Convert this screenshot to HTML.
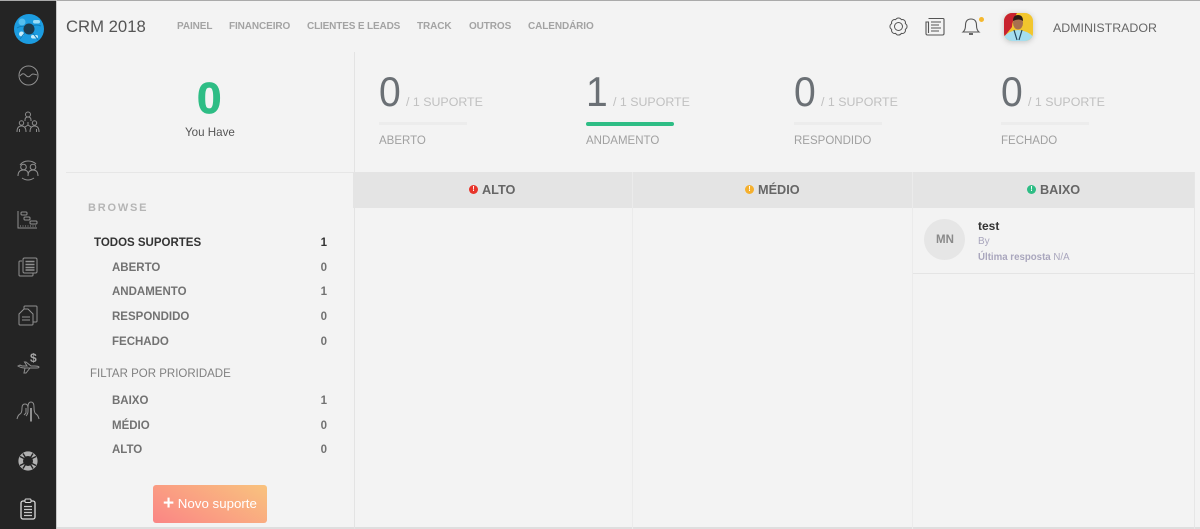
<!DOCTYPE html>
<html><head><meta charset="utf-8"><style>
html,body{margin:0;padding:0}
body{width:1200px;height:529px;overflow:hidden;background:#f3f3f3;position:relative;font-family:"Liberation Sans",sans-serif}
.t{position:absolute;white-space:nowrap;line-height:1}
.b{position:absolute}
svg{position:absolute;overflow:visible}
.nav{font-size:10px;font-weight:bold;color:#a3a3a3;top:22px;letter-spacing:-.1px}
.m{font-size:11.500px;font-weight:bold;color:#727272;left:112px}
.n{font-size:11.500px;font-weight:bold;color:#727272;right:873px}
.big{font-size:42px;color:#6b7075;top:71px;transform:scaleX(.93);transform-origin:left}
.sub{font-size:12.400px;color:#c0c0c0;top:96px}
.lab{font-size:11.500px;color:#a0a0a0;top:136px}
.hd{font-size:12.700px;font-weight:bold;color:#666;top:184px}
.dot{position:absolute;top:185px;width:9px;height:9px;border-radius:50%;color:#fff;font:bold 7px/9px "Liberation Sans",sans-serif;text-align:center}
.s path,.s circle,.s rect{fill:none;stroke:#8f8f8f;stroke-width:1}
</style></head><body>
<div class="b" style="left:0;top:0;width:1200px;height:1px;background:#aaa"></div>
<div class="b" style="left:0;top:1px;width:56px;height:528px;background:#242424"></div>
<div class="b" style="left:56px;top:0;width:1px;height:529px;background:#c8c8c8"></div>
<div class="b" style="left:57px;top:527px;width:1143px;height:2px;background:#dedede"></div>

<!-- logo -->
<svg style="left:14px;top:14px" width="30" height="30" viewBox="0 0 30 30">
<circle cx="15" cy="15" r="15" fill="#1c9ce0"/>
<circle cx="8" cy="8" r="3.500" fill="#55bff0"/><rect x="19" y="6" width="7" height="3.500" rx="1.700" fill="#9adcf8"/>
<circle cx="7.500" cy="20" r="2.500" fill="#c5ecfb"/><rect x="17" y="21" width="7" height="3.500" rx="1.700" fill="#c5ecfb"/>
<path d="M3 14Q9 10 15 15M27 12Q20 9 15 15M6 25Q11 18 15 15M24 26Q20 20 15 15" stroke="#0f7dbb" stroke-width="1" fill="none"/>
<circle cx="15" cy="15" r="5.500" fill="#1e3a4c"/>
</svg>
<!-- sidebar icons -->
<svg class="s" style="left:18px;top:65px" width="21" height="21" viewBox="0 0 21 21"><circle cx="10.500" cy="10.500" r="9.500"/><path d="M2 11Q5 7 7.500 10T12 11T15 9T19 10"/></svg>
<svg class="s" style="left:16px;top:111px" width="24" height="22" viewBox="0 0 24 22"><circle cx="12" cy="3.500" r="2.500"/><path d="M9 10V9Q9 6 12 6T15 9V10M12 11V14M12 14L9 16M12 14L15 16"/><circle cx="5.500" cy="12" r="2.200"/><path d="M1 21Q1 15 5.500 15T10 21M3.500 21V18"/><circle cx="18.500" cy="12" r="2.200"/><path d="M14 21Q14 15 18.500 15T23 21M20.500 21V18"/></svg>
<svg class="s" style="left:16px;top:160px" width="24" height="22" viewBox="0 0 24 22"><circle cx="7.500" cy="7" r="2.800"/><circle cx="17" cy="7" r="2.800"/><path d="M2 16Q2 10 7.500 10T12 16M12 16Q12 10 17 10T22 16M4 5Q7 1 12 1Q17 1 20 4M6 18Q12 22 18 18"/></svg>
<svg class="s" style="left:17px;top:210px" width="21" height="19" viewBox="0 0 21 19"><path d="M1 1V18H20"/><rect x="4" y="2" width="6" height="3" rx="1"/><rect x="7" y="7" width="6" height="3" rx="1"/><rect x="13" y="11" width="7" height="3" rx="1"/><path d="M3 16H19" stroke-dasharray="1 1.500"/></svg>
<svg class="s" style="left:18px;top:257px" width="20" height="20" viewBox="0 0 20 20"><path d="M4 4H2Q1 4 1 5V18Q1 19 2 19H14Q15 19 15 18V16"/><rect x="5" y="1" width="14" height="15" rx="1.500"/><path d="M7.500 4.500H16.500M7.500 7.500H16.500M7.500 10.500H16.500M7.500 13H16.500" style="stroke-width:1.600"/></svg>
<svg class="s" style="left:18px;top:305px" width="20" height="21" viewBox="0 0 20 21"><path d="M6 4V2Q6 1 7 1H18Q19 1 19 2V16Q19 17 18 17H15"/><path d="M6 4H10L15 9V19Q15 20 14 20H2Q1 20 1 19V9Z"/><path d="M4 12H12M4 15H12"/></svg>
<svg class="s" style="left:17px;top:353px" width="23" height="22" viewBox="0 0 23 22"><path d="M1 13Q4 15 8 15H20Q22 15 22 14Q21 13 18 13H14L9 9H7.500L10 13H5L3 12Z"/><path d="M8 15L7 20H9L13 15"/><text x="13" y="9" font-family="Liberation Sans" font-size="12" font-weight="bold" fill="#a5a5a5" stroke="none">$</text></svg>
<svg class="s" style="left:16px;top:400px" width="24" height="22" viewBox="0 0 24 22"><path d="M1 19Q2 15 4 14Q6 13 6 8Q6 4 9 4T12 8M23 19Q22 15 20 14Q18 13 18 7Q18 2 15 2T12 7V11Q12 14 10 16M14.500 8V21H15.500V8M10 8V13Q9 14 8 15"/></svg>
<svg style="left:18px;top:451px" width="20" height="20" viewBox="0 0 20 20"><circle cx="10" cy="10" r="7.300" fill="none" stroke="#b0b0b0" stroke-width="4.600"/><path d="M5 2.500L7.500 6.500M15 2.500L12.500 6.500M5 17.500L7.500 13.500M15 17.500L12.500 13.500M2 5.500L6 7.500M18 5.500L14 7.500M2 14.500L6 12.500M18 14.500L14 12.500" stroke="#242424" stroke-width="1.400"/></svg>
<svg style="left:20px;top:498px" width="16" height="22" viewBox="0 0 16 22"><rect x="1" y="3" width="14" height="18" rx="2" fill="none" stroke="#dcdcdc" stroke-width="1.300"/><rect x="5" y="1" width="6" height="3.500" rx="1" fill="#242424" stroke="#dcdcdc"/><path d="M4 8.500H12M4 11.500H12M4 14.500H12M4 17.500H12" stroke="#c8c8c8" stroke-width="1.200"/></svg>

<!-- header -->
<div class="t" style="left:66px;top:19px;font-size:16.700px;color:#555">CRM 2018</div>
<div class="t nav" style="left:177px">PAINEL</div>
<div class="t nav" style="left:229px">FINANCEIRO</div>
<div class="t nav" style="left:307px;letter-spacing:-.15px">CLIENTES E LEADS</div>
<div class="t nav" style="left:417px">TRACK</div>
<div class="t nav" style="left:469px">OUTROS</div>
<div class="t nav" style="left:528px">CALENDÁRIO</div>

<svg style="left:889px;top:17px" width="19" height="19" viewBox="0 0 19 19"><path d="M16.340 12.330A3.200 3.200 0 0 1 12.330 16.340A3.200 3.200 0 0 1 6.670 16.340A3.200 3.200 0 0 1 2.660 12.330A3.200 3.200 0 0 1 2.660 6.670A3.200 3.200 0 0 1 6.670 2.660A3.200 3.200 0 0 1 12.330 2.660A3.200 3.200 0 0 1 16.340 6.670A3.200 3.200 0 0 1 16.340 12.330Z" fill="none" stroke="#555" stroke-width="1"/><circle cx="9.500" cy="9.500" r="4" fill="none" stroke="#555" stroke-width="1"/></svg>
<svg style="left:925px;top:17px" width="20" height="19" viewBox="0 0 20 19"><path d="M3.500 1.500H18Q19 1.500 19 2.500V16.500Q19 18 17.500 18H2.500Q1 18 1 16.500V5H3.500V16" fill="none" stroke="#555" stroke-width="1.100"/><path d="M6 5H16M6 8H14M6 11H16M6 14H14" stroke="#555" stroke-width="1.100"/></svg>
<svg style="left:962px;top:17px" width="18" height="19" viewBox="0 0 18 19"><path d="M1 15H17Q14.500 13 14.500 8.500Q14.500 2 9 2T3.500 8.500Q3.500 13 1 15Z" fill="none" stroke="#555" stroke-width="1.100"/><path d="M7 17H11" stroke="#444" stroke-width="1.600"/></svg>
<div class="b" style="left:979px;top:17px;width:5px;height:5px;border-radius:50%;background:#f5b82e"></div>

<!-- avatar -->
<svg style="left:1004px;top:13px;filter:drop-shadow(0 1px 3px rgba(0,0,0,.2))" width="29" height="28" viewBox="0 0 29 28">
<defs><clipPath id="av"><rect width="29" height="28" rx="8"/></clipPath></defs>
<g clip-path="url(#av)"><rect width="29" height="28" fill="#f2c62d"/><path d="M0 0H13Q8 8 8 14L0 24Z" fill="#c8232f"/>
<path d="M0 28V24Q4 18 14 17Q25 18 29 24V28Z" fill="#a5def0"/>
<ellipse cx="14" cy="10" rx="5" ry="6.500" fill="#a8704f"/><path d="M9 8Q9 2 14 2T19 8Q15 5 9 8Z" fill="#2a1c16"/>
<path d="M10 17L13 27M18 17L15 27" stroke="#24465c" stroke-width="1.200"/></g></svg>
<div class="t" style="left:1053px;top:22px;font-size:12.400px;color:#666">ADMINISTRADOR</div>

<!-- left top -->
<div class="t" style="left:197px;top:77px;font-size:44px;font-weight:bold;color:#2ebd85;-webkit-text-stroke:.8px #2ebd85">0</div>
<div class="t" style="left:185px;top:127px;font-size:11.600px;color:#555">You Have</div>
<div class="b" style="left:66px;top:172px;width:288px;height:1px;background:#e6e6e6"></div>
<div class="b" style="left:354px;top:52px;width:1px;height:477px;background:#e3e3e3"></div>

<!-- stats -->
<div class="t big" style="left:379px">0</div><div class="t sub" style="left:406px">/ 1 SUPORTE</div>
<div class="b" style="left:379px;top:122px;width:88px;height:3px;background:#ececec"></div>
<div class="t lab" style="left:379px">ABERTO</div>
<div class="t big" style="left:586px">1</div><div class="t sub" style="left:613px">/ 1 SUPORTE</div>
<div class="b" style="left:586px;top:122px;width:88px;height:4px;border-radius:2px;background:#2ebd85"></div>
<div class="t lab" style="left:586px">ANDAMENTO</div>
<div class="t big" style="left:794px">0</div><div class="t sub" style="left:821px">/ 1 SUPORTE</div>
<div class="b" style="left:794px;top:122px;width:88px;height:3px;background:#ececec"></div>
<div class="t lab" style="left:794px">RESPONDIDO</div>
<div class="t big" style="left:1001px">0</div><div class="t sub" style="left:1028px">/ 1 SUPORTE</div>
<div class="b" style="left:1001px;top:122px;width:88px;height:3px;background:#ececec"></div>
<div class="t lab" style="left:1001px">FECHADO</div>

<!-- columns -->
<div class="b" style="left:353px;top:172px;width:841px;height:36px;background:#e4e4e4"></div>
<div class="b" style="left:632px;top:172px;width:1px;height:357px;background:#ebebeb"></div>
<div class="b" style="left:912px;top:172px;width:1px;height:357px;background:#ebebeb"></div>
<div class="b" style="left:1194px;top:172px;width:1px;height:357px;background:#e6e6e6"></div>
<div class="dot" style="left:469px;background:#e8352b">!</div>
<div class="t hd" style="left:482px">ALTO</div>
<div class="dot" style="left:745px;background:#f5b02e">!</div>
<div class="t hd" style="left:758px">MÉDIO</div>
<div class="dot" style="left:1027px;background:#2ebd85">!</div>
<div class="t hd" style="left:1040px">BAIXO</div>

<!-- card -->
<div class="b" style="left:924px;top:219px;width:41px;height:41px;border-radius:50%;background:#e6e6e6"></div>
<div class="t" style="left:936px;top:235px;font-size:11.500px;font-weight:bold;color:#8a8a8a">MN</div>
<div class="t" style="left:978px;top:220px;font-size:12px;font-weight:bold;color:#333">test</div>
<div class="t" style="left:978px;top:237px;font-size:10px;color:#a9a6bd">By</div>
<div class="t" style="left:978px;top:253px;font-size:9.700px;color:#a9a6bd"><b>Última resposta</b> N/A</div>
<div class="b" style="left:913px;top:273px;width:281px;height:1px;background:#e4e4e4"></div>

<!-- browse -->
<div class="t" style="left:88px;top:203px;font-size:11px;font-weight:bold;color:#b5b5b5;letter-spacing:1.800px">BROWSE</div>
<div class="t m" style="left:94px;top:238px;color:#333">TODOS SUPORTES</div><div class="t n" style="top:238px;color:#333">1</div>
<div class="t m" style="top:263px">ABERTO</div><div class="t n" style="top:263px">0</div>
<div class="t m" style="top:287px">ANDAMENTO</div><div class="t n" style="top:287px">1</div>
<div class="t m" style="top:312px">RESPONDIDO</div><div class="t n" style="top:312px">0</div>
<div class="t m" style="top:337px">FECHADO</div><div class="t n" style="top:337px">0</div>
<div class="t" style="left:90px;top:369px;font-size:11.500px;color:#808080">FILTAR POR PRIORIDADE</div>
<div class="t m" style="top:396px">BAIXO</div><div class="t n" style="top:396px">1</div>
<div class="t m" style="top:421px">MÉDIO</div><div class="t n" style="top:421px">0</div>
<div class="t m" style="top:445px">ALTO</div><div class="t n" style="top:445px">0</div>

<div class="b" style="left:153px;top:485px;width:114px;height:38px;border-radius:3px;background:linear-gradient(30deg,#fa8585,#f9c37e)"></div>
<div class="t" style="left:163px;top:497px;font-size:13.300px;color:#fff"><b style="font-size:19px;line-height:14px;vertical-align:-1px">+</b> Novo suporte</div>
</body></html>
